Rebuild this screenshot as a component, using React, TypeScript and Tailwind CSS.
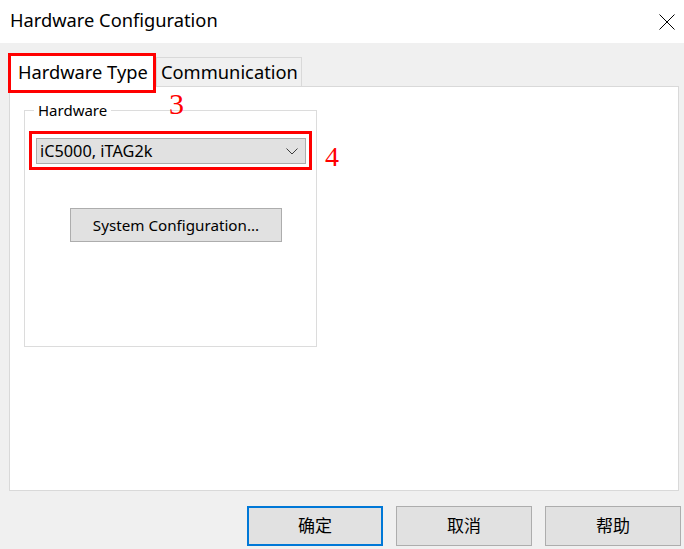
import React from "react";

const ui = { fontFamily: '"Noto Sans", "Noto Sans CJK SC", sans-serif' };

function CloseIcon() {
  return (
    <svg width="16" height="16" viewBox="0 0 16 16" className="text-black">
      <path d="M0.5 0.5L15.5 15.5M15.5 0.5L0.5 15.5" stroke="currentColor" strokeWidth="1" />
    </svg>
  );
}

function Chevron() {
  return (
    <svg width="12" height="7" viewBox="0 0 12 7">
      <path d="M0.5 0.5L6 6L11.5 0.5" fill="none" stroke="#3c3c3c" strokeWidth="1" />
    </svg>
  );
}

function DlgButton({ label, primary }: { label: string; primary?: boolean }) {
  return (
    <div
      className={
        "w-[136px] h-[40px] flex items-center justify-center bg-[#e1e1e1] text-[17px] text-black " +
        (primary ? "border-2 border-[#0078d7]" : "border border-[#adadad]")
      }
    >
      {label}
    </div>
  );
}

export default function App() {
  return (
    <div className="relative w-[684px] h-[549px] bg-[#f0f0f0] flex flex-col overflow-hidden" style={ui}>
      {/* title bar */}
      <div className="h-[43px] bg-white flex items-center justify-between pl-[10px] pr-[9px] shrink-0">
        <span className="text-[18.3px] text-black leading-none pb-[2px]">Hardware Configuration</span>
        <CloseIcon />
      </div>

      {/* tabs */}
      <div className="h-[43px] flex items-start pl-[8px] pt-[10px] shrink-0">
        <div className="relative z-10 w-[148px] h-[40px] bg-white border-[3px] border-[#ff0000] flex items-center pl-[7px] pb-[2px] text-[18.3px] text-black leading-none">
          Hardware Type
        </div>
        <div className="mt-[4px] h-[29px] w-[146px] border border-b-0 border-[#d9d9d9] flex items-center pl-[4px] text-[18.3px] text-black leading-none">
          Communication
        </div>
      </div>

      {/* tab page */}
      <div className="ml-[9px] w-[670px] h-[405px] border border-[#d9d9d9] bg-white pl-[14px] pt-[23px] shrink-0">
        <div className="relative w-[293px] h-[237px] border border-[#dcdcdc] pl-[4px] pt-[20px]">
          <span className="absolute -top-[11px] left-[9px] bg-white px-[4px] text-[15px] text-black leading-[20px]">
            Hardware
          </span>
          <div className="w-[283px] h-[39px] border-[3px] border-[#ff0000] pl-[4px] pt-[4px]">
            <div className="w-[270px] h-[26px] bg-[#e1e1e1] border border-[#adadad] flex items-center justify-between pl-[3px] pr-[7px]">
              <span className="text-[16.3px] text-black leading-none">iC5000, iTAG2k</span>
              <Chevron />
            </div>
          </div>
          <span
            className="absolute left-[300px] top-[32px] text-[28px] leading-none text-[#ff0000]"
            style={{ fontFamily: '"Liberation Serif", serif' }}
          >
            4
          </span>
          <div className="ml-[41px] mt-[38px] w-[212px] h-[34px] bg-[#e1e1e1] border border-[#adadad] flex items-center justify-center text-[15.2px] text-black">
            System Configuration...
          </div>
        </div>
      </div>

      {/* buttons */}
      <div className="flex justify-end gap-[13px] pr-[3px] pt-[15px]">
        <DlgButton label="确定" primary />
        <DlgButton label="取消" />
        <DlgButton label="帮助" />
      </div>

      <span
        className="absolute left-[169px] top-[89px] text-[30px] leading-none text-[#ff0000]"
        style={{ fontFamily: '"Liberation Serif", serif' }}
      >
        3
      </span>
    </div>
  );
}
